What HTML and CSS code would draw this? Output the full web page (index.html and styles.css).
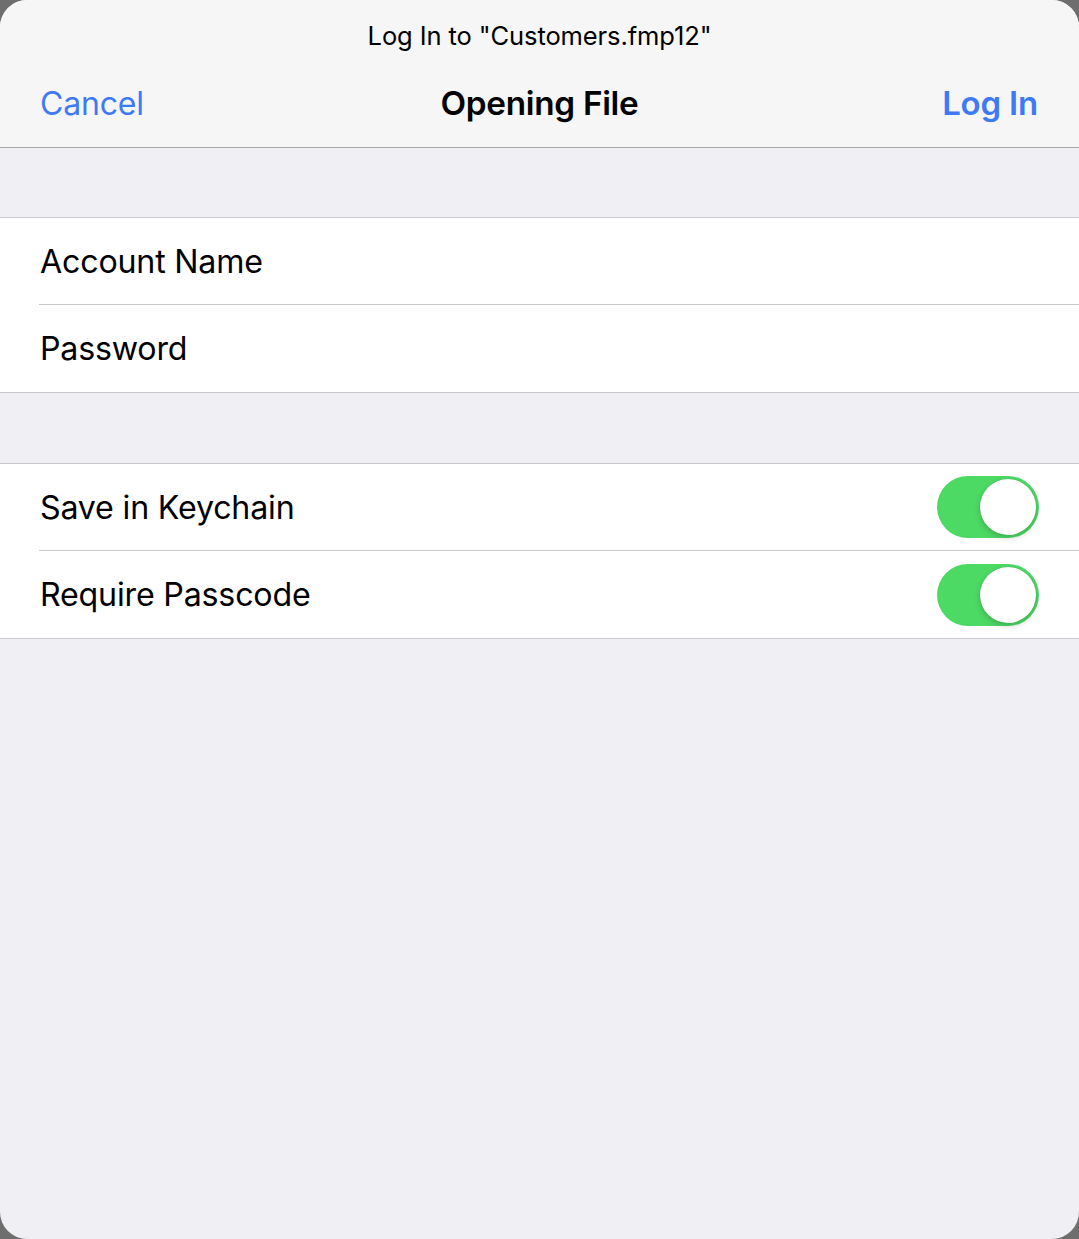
FILE: index.html
```html
<!DOCTYPE html>
<html lang="en">
<head>
<meta charset="utf-8">
<title>Log In</title>
<link rel="stylesheet" href="styles.css">
</head>
<body>
<div class="sheet">
  <header class="navbar">
    <div class="prompt">Log In to "Customers.fmp12"</div>
    <div class="nav-row">
      <span class="nav-btn cancel">Cancel</span>
      <span class="nav-title">Opening File</span>
      <span class="nav-btn done">Log In</span>
    </div>
  </header>

  <div class="spacer"></div>
  <section class="group">
    <div class="cell"><span class="label">Account Name</span></div>
    <div class="cell"><span class="label">Password</span></div>
  </section>

  <div class="spacer wide"></div>
  <section class="group">
    <div class="cell">
      <span class="label">Save in Keychain</span>
      <span class="switch on"><span class="knob"></span></span>
    </div>
    <div class="cell">
      <span class="label">Require Passcode</span>
      <span class="switch on"><span class="knob"></span></span>
    </div>
  </section>
</div>
</body>
</html>
```

FILE: styles.css
```css
html, body {
  margin: 0;
  padding: 0;
  height: 100%;
  background: #6e6e6e;
}

body {
  font-family: "Inter", "Liberation Sans", sans-serif;
  color: #000;
}

.sheet {
  height: 1239px;
  background: #efeff4;
  border-radius: 27px;
  overflow: hidden;
  display: flex;
  flex-direction: column;
}

.navbar {
  background: #f6f6f6;
  border-bottom: 1px solid #a8a8ab;
  height: 147px;
  display: flex;
  flex-direction: column;
}

.prompt {
  text-align: center;
  font-size: 25.5px;
  letter-spacing: -0.1px;
  padding-top: 21px;
  line-height: 30px;
}

.nav-row {
  display: flex;
  align-items: center;
  justify-content: space-between;
  padding: 0 41px 0 40px;
  margin-top: 30px;
  height: 44px;
  position: relative;
}

.nav-btn {
  font-size: 32px;
  color: #3f7af6;
  letter-spacing: -0.2px;
}

.nav-btn.done {
  font-weight: 600;
  font-size: 33px;
}

.nav-title {
  position: absolute;
  left: 0;
  right: 0;
  text-align: center;
  font-size: 33.3px;
  font-weight: 600;
  letter-spacing: -0.3px;
  pointer-events: none;
}

.spacer {
  height: 69px;
}

.spacer.wide {
  height: 70px;
}

.group {
  background: #fff;
  border-top: 1px solid #c8c7cc;
  border-bottom: 1px solid #c8c7cc;
}

.cell {
  height: 86px;
  margin-left: 39px;
  padding-right: 40px;
  display: flex;
  align-items: center;
  justify-content: space-between;
}

.cell + .cell {
  height: 87px;
  border-top: 1px solid #c8c7cc;
}

.label {
  font-size: 32.2px;
  letter-spacing: -0.2px;
  padding-left: 1px;
}

.switch {
  width: 102px;
  height: 62px;
  border-radius: 31px;
  background: #4cd964;
  position: relative;
  display: block;
}

.knob {
  position: absolute;
  top: 3px;
  right: 3px;
  width: 56px;
  height: 56px;
  border-radius: 50%;
  background: #fff;
  box-shadow: 0 3px 6px rgba(0, 0, 0, 0.18), 0 0 1px rgba(0, 0, 0, 0.25);
}
```
